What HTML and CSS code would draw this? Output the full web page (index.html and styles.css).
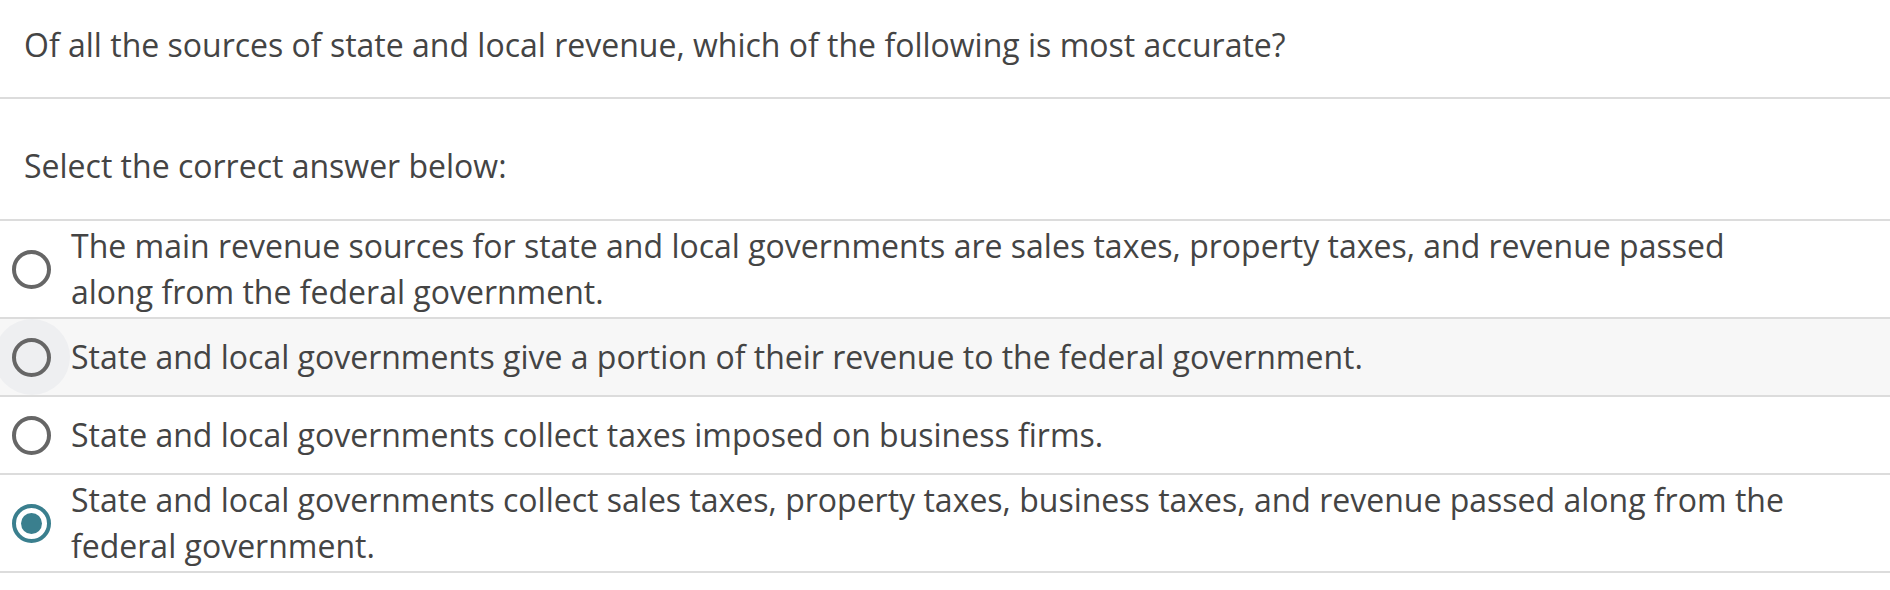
FILE: index.html
```html
<!DOCTYPE html>
<html lang="en">
<head>
<meta charset="utf-8">
<title>Question</title>
<link rel="stylesheet" href="styles.css">
</head>
<body>
<div class="question">
  <div class="stem">Of all the sources of state and local revenue, which of the following is most accurate?</div>
  <div class="prompt">Select the correct answer below:</div>
  <ul class="options">
    <li class="option">
      <span class="radio"></span>
      <span class="label">The main revenue sources for state and local governments are sales taxes, property taxes, and revenue passed along from the federal government.</span>
    </li>
    <li class="option hover">
      <span class="radio"></span>
      <span class="label">State and local governments give a portion of their revenue to the federal government.</span>
    </li>
    <li class="option">
      <span class="radio"></span>
      <span class="label">State and local governments collect taxes imposed on business firms.</span>
    </li>
    <li class="option">
      <span class="radio checked"></span>
      <span class="label">State and local governments collect sales taxes, property taxes, business taxes, and revenue passed along from the federal government.</span>
    </li>
  </ul>
</div>
</body>
</html>
```
FILE: styles.css
```css
html, body {
  margin: 0;
  padding: 0;
  background: #ffffff;
}
body {
  font-family: "Open Sans", "Liberation Sans", sans-serif;
  font-size: 32px;
  line-height: 46px;
  color: #444444;
}
.stem {
  padding: 22px 24px 29px;
  border-bottom: 2px solid #dcdcdc;
}
.prompt {
  padding: 44px 24px 30px;
  border-bottom: 2px solid #dcdcdc;
}
.options {
  list-style: none;
  margin: 0;
  padding: 0;
}
.option {
  display: flex;
  align-items: center;
  min-height: 78px;
  padding: 2px 90px 2px 0;
  border-bottom: 2px solid #dcdcdc;
  box-sizing: border-box;
}
.option.hover {
  position: relative;
  z-index: 0;
  overflow: hidden;
  background: #f7f7f7;
}
.radio {
  position: relative;
  flex: none;
  width: 39px;
  height: 39px;
  margin: 0 20px 0 12px;
  border: 4px solid #666666;
  border-radius: 50%;
  box-sizing: border-box;
  background: #ffffff;
}
.option.hover .radio {
  background: transparent;
}
.option.hover .radio::before {
  content: "";
  position: absolute;
  left: 50%;
  top: 50%;
  width: 76px;
  height: 76px;
  margin: -38px 0 0 -38px;
  border-radius: 50%;
  background: #eeeff1;
  z-index: -1;
}
.radio.checked {
  border-color: #3a7f8e;
}
.radio.checked::after {
  content: "";
  position: absolute;
  left: 50%;
  top: 50%;
  width: 21px;
  height: 21px;
  margin: -10.5px 0 0 -10.5px;
  border-radius: 50%;
  background: #3a7f8e;
}
.label {
  flex: 1;
}
```
